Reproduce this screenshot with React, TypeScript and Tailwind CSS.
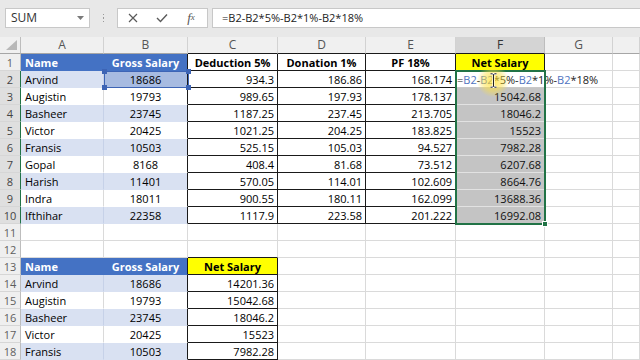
import type { ReactNode } from "react"
import clsx, { type ClassValue } from "clsx"
import { twMerge } from "tailwind-merge"

const cx = (...a: ClassValue[]) => twMerge(clsx(a))

const table1 = [
  ["Arvind", "18686", "934.3", "186.86", "168.174", ""],
  ["Augistin", "19793", "989.65", "197.93", "178.137", "15042.68"],
  ["Basheer", "23745", "1187.25", "237.45", "213.705", "18046.2"],
  ["Victor", "20425", "1021.25", "204.25", "183.825", "15523"],
  ["Fransis", "10503", "525.15", "105.03", "94.527", "7982.28"],
  ["Gopal", "8168", "408.4", "81.68", "73.512", "6207.68"],
  ["Harish", "11401", "570.05", "114.01", "102.609", "8664.76"],
  ["Indra", "18011", "900.55", "180.11", "162.099", "13688.36"],
  ["Ifthihar", "22358", "1117.9", "223.58", "201.222", "16992.08"],
]

const table2 = [
  ["Arvind", "18686", "14201.36"],
  ["Augistin", "19793", "15042.68"],
  ["Basheer", "23745", "18046.2"],
  ["Victor", "20425", "15523"],
  ["Fransis", "10503", "7982.28"],
]

function Cell({ className, children }: { className?: string; children?: ReactNode }) {
  return (
    <div
      className={cx(
        "flex min-w-0 items-center overflow-hidden whitespace-nowrap border-r border-b border-r-[#dadada] border-b-[#dadada] bg-white px-[3px] text-[11px] leading-none text-black",
        className,
      )}
    >
      {children}
    </div>
  )
}

function RowHead({ n }: { n: number }) {
  const sel = n >= 2 && n <= 10
  return (
    <Cell
      className={cx(
        "justify-center bg-[#efefef] px-0 text-[#5e5e5e] border-r-[#bdbdbd] border-b-[#d6d6d6]",
        sel && "bg-[#dfdfdf] text-[#444] border-r-[#217346]",
      )}
    >
      {n}
    </Cell>
  )
}

function ColHead({ label, dark, sel }: { label?: string; dark?: boolean; sel?: boolean }) {
  return (
    <Cell
      className={cx(
        "justify-center bg-[#f0f0f0] text-[12px] text-[#555] border-r-[#d2d2d2] border-b-[#a6a6a6]",
        dark && "border-b-[#1a1a1a]",
        sel && "bg-[#d4d4d4] text-[#333] border-r-[#bdbdbd]",
      )}
    >
      {label}
    </Cell>
  )
}

type Band = "head" | "band" | "plain"

function BlueA({ kind, children }: { kind: Band; children?: ReactNode }) {
  return (
    <Cell
      className={cx(
        "px-[4px]",
        kind === "head" && "bg-[#4472c4] font-bold text-white border-r-[#4472c4] border-b-[#4472c4]",
        kind === "band" && "bg-[#d9e1f2] border-r-[#c6d1e8] border-b-[#d9e1f2]",
        kind === "plain" && "bg-white border-b-white",
      )}
    >
      {children}
    </Cell>
  )
}

function BlueB({ kind, children, className }: { kind: Band; children?: ReactNode; className?: string }) {
  return (
    <Cell
      className={cx(
        "justify-center border-r-[#1a1a1a]",
        kind === "head" && "bg-[#4472c4] font-bold text-white border-b-[#4472c4]",
        kind === "band" && "bg-[#d9e1f2] border-b-[#d9e1f2]",
        kind === "plain" && "bg-white border-b-white",
        className,
      )}
    >
      {children}
    </Cell>
  )
}

function Boxed({ children, head, className }: { children?: ReactNode; head?: boolean; className?: string }) {
  return (
    <Cell
      className={cx(
        "justify-end border-r-[#1a1a1a] border-b-[#1a1a1a]",
        head && "justify-center font-bold",
        className,
      )}
    >
      {children}
    </Cell>
  )
}

function Formula() {
  const ref = "text-[#4f74c0]"
  return (
    <span className="text-[#222]">
      =<span className={ref}>B2</span>-<span className={ref}>B2</span>*5%-<span className={ref}>B2</span>*1%-
      <span className={ref}>B2</span>*18%
    </span>
  )
}

export default function App() {
  const band = (i: number): Band => (i % 2 === 0 ? "band" : "plain")

  return (
    <div className="h-[360px] w-[640px] overflow-hidden bg-white font-['Open_Sans',sans-serif]">
      {/* formula bar */}
      <div className="flex h-[37px] items-start bg-[#e8e8e8] pt-[8px]">
        <div className="ml-[5px] flex h-[20px] w-[85px] items-center justify-between border border-[#c8c8c8] bg-white px-[5px] text-[12px] text-[#333]">
          <span>SUM</span>
          <svg width="7" height="5" viewBox="0 0 7 5">
            <path d="M0 0 L7 0 L3.5 4 Z" fill="#7a7a7a" />
          </svg>
        </div>
        <div className="flex h-[20px] w-[27px] flex-col items-center justify-center gap-[2px]">
          <span className="h-[1.5px] w-[1.5px] bg-[#9a9a9a]" />
          <span className="h-[1.5px] w-[1.5px] bg-[#9a9a9a]" />
          <span className="h-[1.5px] w-[1.5px] bg-[#9a9a9a]" />
        </div>
        <div className="flex h-[20px] w-[91px] items-center border border-[#c8c8c8] bg-white">
          <div className="flex w-[30px] justify-center">
            <svg width="10" height="10" viewBox="0 0 10 10">
              <path d="M1 1 L9 9 M9 1 L1 9" stroke="#5a5a5a" strokeWidth="1.2" />
            </svg>
          </div>
          <div className="flex w-[28px] justify-center">
            <svg width="12" height="10" viewBox="0 0 12 10">
              <path d="M1 5 L4.5 8.5 L11 1.5" stroke="#5a5a5a" strokeWidth="1.4" fill="none" />
            </svg>
          </div>
          <div className="flex w-[30px] justify-center font-['Liberation_Serif',serif] text-[13px] italic text-[#555]">
            f<span className="mt-[3px] text-[9px]">x</span>
          </div>
        </div>
        <div className="ml-[4px] flex h-[20px] flex-1 items-center border border-r-0 border-[#c8c8c8] bg-white pl-[9px] text-[11px] text-[#222]">
          =B2-B2*5%-B2*1%-B2*18%
        </div>
      </div>

      {/* sheet */}
      <div className="relative grid auto-rows-[17px] grid-cols-[21px_83px_84px_90px_88px_90px_89px_68px_1fr]">
        {/* column headers */}
        <Cell className="relative bg-[#f0f0f0] border-r-[#bdbdbd] border-b-[#a6a6a6]">
          <svg className="absolute right-[3px] bottom-[3px]" width="11" height="10" viewBox="0 0 11 10">
            <path d="M11 0 L11 10 L0 10 Z" fill="#b8b8b8" />
          </svg>
        </Cell>
        <ColHead label="A" />
        <ColHead label="B" />
        <ColHead label="C" dark />
        <ColHead label="D" dark />
        <ColHead label="E" dark />
        <ColHead label="F" dark sel />
        <ColHead label="G" />
        <ColHead />

        {/* row 1 */}
        <RowHead n={1} />
        <BlueA kind="head">Name</BlueA>
        <BlueB kind="head">Gross Salary</BlueB>
        <Boxed head>Deduction 5%</Boxed>
        <Boxed head>Donation 1%</Boxed>
        <Boxed head>PF 18%</Boxed>
        <Boxed head className="bg-[#ffff00]">
          Net Salary
        </Boxed>
        <Cell />
        <Cell />

        {/* rows 2-10 */}
        {table1.map((r, i) => {
          const n = i + 2
          return [
            <RowHead key={`h${n}`} n={n} />,
            <BlueA key={`a${n}`} kind={band(i)}>
              {r[0]}
            </BlueA>,
            <BlueB key={`b${n}`} kind={band(i)} className={n === 2 ? "bg-[#a7bbe1]" : undefined}>
              {r[1]}
            </BlueB>,
            <Boxed key={`c${n}`}>{r[2]}</Boxed>,
            <Boxed key={`d${n}`}>{r[3]}</Boxed>,
            <Boxed key={`e${n}`}>{r[4]}</Boxed>,
            n === 2 ? (
              <Cell key="f2" className="relative z-10 overflow-visible px-[1px] border-b-[#c8c8c8]">
                <Formula />
              </Cell>
            ) : (
              <Cell key={`f${n}`} className="justify-end bg-[#c4c4c4] border-b-[#e2e2e2] text-[#111]">
                {r[5]}
              </Cell>
            ),
            <Cell key={`g${n}`} className={n === 2 ? "bg-transparent" : undefined} />,
            <Cell key={`x${n}`} />,
          ]
        })}

        {/* rows 11-12 */}
        {[11, 12].map((n) => [
          <RowHead key={`h${n}`} n={n} />,
          <Cell key={`a${n}`} />,
          <Cell key={`b${n}`} />,
          <Cell key={`c${n}`} className={n === 12 ? "border-b-[#1a1a1a]" : undefined} />,
          <Cell key={`d${n}`} />,
          <Cell key={`e${n}`} />,
          <Cell key={`f${n}`} />,
          <Cell key={`g${n}`} />,
          <Cell key={`x${n}`} />,
        ])}

        {/* row 13 */}
        <RowHead n={13} />
        <BlueA kind="head">Name</BlueA>
        <BlueB kind="head">Gross Salary</BlueB>
        <Boxed head className="bg-[#ffff00]">
          Net Salary
        </Boxed>
        <Cell />
        <Cell />
        <Cell />
        <Cell />
        <Cell />

        {/* rows 14-18 */}
        {table2.map((r, i) => {
          const n = i + 14
          return [
            <RowHead key={`h${n}`} n={n} />,
            <BlueA key={`a${n}`} kind={band(i)}>
              {r[0]}
            </BlueA>,
            <BlueB key={`b${n}`} kind={band(i)}>
              {r[1]}
            </BlueB>,
            <Boxed key={`c${n}`}>{r[2]}</Boxed>,
            <Cell key={`d${n}`} />,
            <Cell key={`e${n}`} />,
            <Cell key={`f${n}`} />,
            <Cell key={`g${n}`} />,
            <Cell key={`x${n}`} />,
          ]
        })}

        {/* B2 reference highlight */}
        <div className="pointer-events-none absolute top-[34px] left-[104px] h-[17px] w-[85px] border border-[#3d64b5]">
          <span className="absolute -top-[3px] -left-[3px] h-[5px] w-[5px] bg-[#3d64b5]" />
          <span className="absolute -top-[3px] -right-[3px] h-[5px] w-[5px] bg-[#3d64b5]" />
          <span className="absolute -bottom-[3px] -left-[3px] h-[5px] w-[5px] bg-[#3d64b5]" />
          <span className="absolute -right-[3px] -bottom-[3px] h-[5px] w-[5px] bg-[#3d64b5]" />
        </div>

        {/* selection F2:F10 */}
        <div className="pointer-events-none absolute top-[33px] left-[455px] z-20 h-[155px] w-[91px] border-2 border-[#217346]">
          <span className="absolute -right-[4px] -bottom-[4px] h-[6px] w-[6px] border border-white bg-[#217346]" />
        </div>

        {/* cursor highlight */}
        <div className="pointer-events-none absolute top-[28px] left-[477px] z-30 h-[32px] w-[32px] rounded-full bg-[radial-gradient(circle,rgba(255,222,40,0.75)_0%,rgba(255,225,60,0.45)_45%,rgba(255,230,80,0)_72%)]" />
        <svg className="pointer-events-none absolute top-[36px] left-[490px] z-40" width="7" height="15" viewBox="0 0 7 15">
          <path d="M0.5 0.8 H2.5 L3.5 1.8 L4.5 0.8 H6.5 M3.5 1.8 V13.2 M0.5 14.2 H2.5 L3.5 13.2 L4.5 14.2 H6.5" stroke="#fff" strokeWidth="2.2" fill="none" />
          <path d="M0.5 0.8 H2.5 L3.5 1.8 L4.5 0.8 H6.5 M3.5 1.8 V13.2 M0.5 14.2 H2.5 L3.5 13.2 L4.5 14.2 H6.5" stroke="#222" strokeWidth="1" fill="none" />
        </svg>
      </div>
    </div>
  )
}
